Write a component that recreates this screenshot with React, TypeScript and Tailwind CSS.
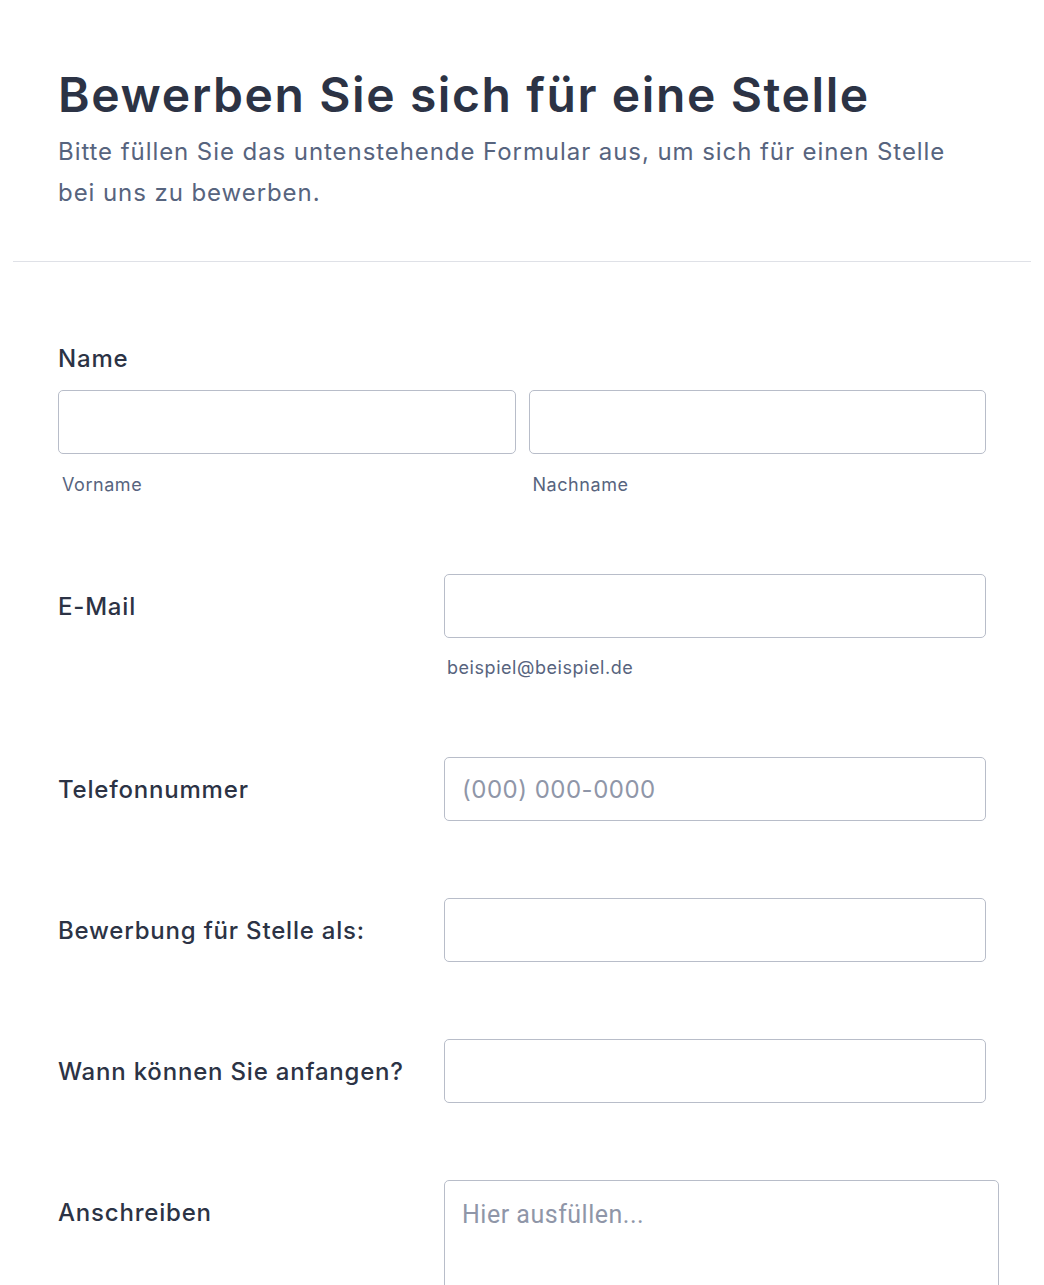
import React from "react";

const inputCls =
  "block w-full h-16 rounded-[5px] border border-[#b8bdc9] bg-white px-[17px] text-[24px] tracking-[0.5px] text-[#2c3345] outline-none placeholder:text-[#8f96a8]";

const subCls = "text-[18px] leading-[24px] tracking-[0.55px] text-[#57647e]";

function Row({
  label,
  children,
}: {
  label: string;
  children: React.ReactNode;
}) {
  return (
    <div className="flex items-start pt-[39px] pb-[38px]">
      <div className="w-[386px] shrink-0 h-16 flex items-center">
        <span className="text-[24px] font-medium text-[#2c3345] leading-[29px] tracking-[0.8px]">
          {label}
        </span>
      </div>
      <div className="flex-1 min-w-0">{children}</div>
    </div>
  );
}

export default function App() {
  return (
    <div className="min-h-screen bg-white font-['Inter',sans-serif]">
      <div className="px-[13px]">
        <div className="px-[45px] pt-[66px] pb-[48px]">
          <h1 className="text-[48px] font-semibold leading-[58px] text-[#2c3345] tracking-[1.6px]">
            Bewerben Sie sich für eine Stelle
          </h1>
          <p className="mt-[7px] max-w-[900px] text-[24px] leading-[41px] tracking-[0.93px] text-[#57647e]">
            Bitte füllen Sie das untenstehende Formular aus, um sich für einen
            Stelle bei uns zu bewerben.
          </p>
        </div>
        <div className="h-px bg-[#dfe1e7]" />
        <div className="px-[45px]">
          {/* Name */}
          <div className="pt-[82px] pb-[38px]">
            <div className="text-[24px] font-medium leading-[29px] tracking-[0.8px] text-[#2c3345]">
              Name
            </div>
            <div className="mt-[17px] flex gap-[13px]">
              <div className="flex-1">
                <input className={inputCls} />
                <div className={`mt-[19px] pl-[4px] ${subCls}`}>Vorname</div>
              </div>
              <div className="flex-1">
                <input className={inputCls} />
                <div className={`mt-[19px] pl-[4px] ${subCls}`}>Nachname</div>
              </div>
            </div>
          </div>

          <Row label="E-Mail">
            <input className={inputCls} />
            <div className={`mt-[18px] pl-[3px] ${subCls}`}>
              beispiel@beispiel.de
            </div>
          </Row>

          <Row label="Telefonnummer">
            <input className={inputCls} placeholder="(000) 000-0000" />
          </Row>

          <Row label="Bewerbung für Stelle als:">
            <input className={inputCls} />
          </Row>

          <Row label="Wann können Sie anfangen?">
            <input className={inputCls} />
          </Row>

          <Row label="Anschreiben">
            <textarea
              className="block w-[555px] h-[200px] resize-none rounded-[5px] border border-[#b8bdc9] bg-white px-[17px] pt-[19px] font-['Roboto',sans-serif] text-[25px] leading-[30px] tracking-[0.5px] text-[#2c3345] outline-none placeholder:text-[#8f96a8]"
              placeholder="Hier ausfüllen..."
            />
          </Row>
        </div>
      </div>
    </div>
  );
}
